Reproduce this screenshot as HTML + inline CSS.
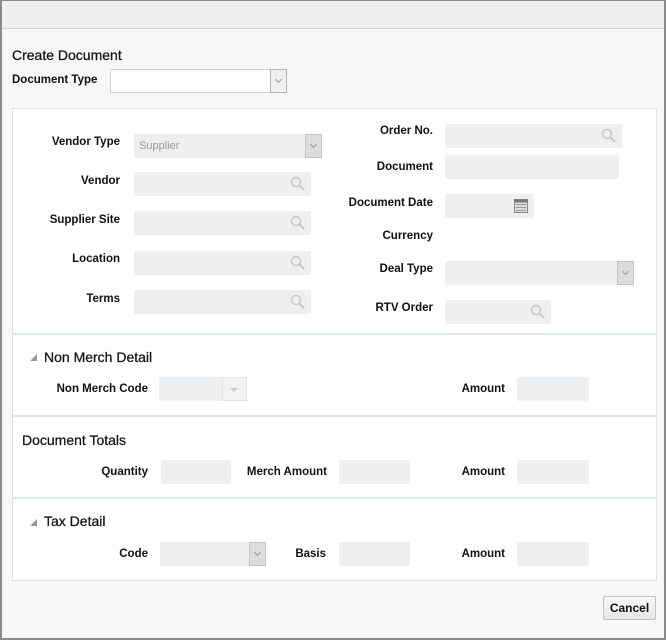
<!DOCTYPE html>
<html><head><style>
*{margin:0;padding:0;box-sizing:border-box}
body{width:666px;height:640px;position:relative;background:#f7f7f7;font-family:"Liberation Sans",Arial,sans-serif;overflow:hidden}
.frame{position:absolute;left:0;top:0;width:666px;height:640px;border:2px solid #8a8a8a;border-top:1px solid #8a8a8a}
.hdr{position:absolute;left:2px;top:1px;width:662px;height:28px;background:#efefef;border-bottom:1px solid #d0d5da}
.a{position:absolute}
.t{position:absolute;font-size:14px;color:#111;-webkit-text-stroke:0.25px #111}
.l{position:absolute;font-size:11.5px;font-weight:bold;color:#111;text-align:right;white-space:nowrap;margin-top:1px}
.f{position:absolute;background:#eeeff0;border-radius:2px;height:24px}
.panel{position:absolute;left:12px;top:108px;width:645px;height:473px;background:#fff;border:1px solid #d9e0e6}
.sep{position:absolute;left:12px;width:645px;height:2px;background:#dde4ea}
.dd{position:absolute;top:0;right:0;width:17px;height:24px;background:#dcdcdc;border:1px solid #c4c4c4}
.dd:after{content:"";position:absolute;left:5px;top:7px;width:4px;height:4px;border-right:1px solid #999;border-bottom:1px solid #999;transform:rotate(45deg)}
.mg{position:absolute;right:5px;top:4px}
.tri{position:absolute;width:0;height:0;border-left:7px solid transparent;border-bottom:7px solid #999}
</style></head><body>
<div class="hdr"></div>
<div class="t" style="left:12px;top:47px">Create Document</div>
<div class="l" style="left:12px;top:73px">Document Type</div>
<div class="a" style="left:110px;top:69px;width:177px;height:24px;background:#fff;border:1px solid #d0d4d8"><div class="dd" style="top:-1px;right:-1px;background:#f0f0f0;border-color:#b5b5b5"></div></div>
<div class="panel"></div>

<div class="l" style="right:546px;top:135px">Vendor Type</div>
<div class="f" style="left:134px;top:134px;width:188px"><span style="position:absolute;left:5px;top:6px;font-size:11px;color:#999">Supplier</span><div class="dd"></div></div>
<div class="l" style="right:546px;top:174px">Vendor</div>
<div class="f" style="left:134px;top:172px;width:177px"><svg class="mg" width="16" height="16"><circle cx="6" cy="6" r="4.5" fill="none" stroke="#c8c8c8" stroke-width="1.5"/><line x1="9.5" y1="9.5" x2="14" y2="14" stroke="#c8c8c8" stroke-width="2"/></svg></div>
<div class="l" style="right:546px;top:213px">Supplier Site</div>
<div class="f" style="left:134px;top:211px;width:177px"><svg class="mg" width="16" height="16"><circle cx="6" cy="6" r="4.5" fill="none" stroke="#c8c8c8" stroke-width="1.5"/><line x1="9.5" y1="9.5" x2="14" y2="14" stroke="#c8c8c8" stroke-width="2"/></svg></div>
<div class="l" style="right:546px;top:252px">Location</div>
<div class="f" style="left:134px;top:251px;width:177px"><svg class="mg" width="16" height="16"><circle cx="6" cy="6" r="4.5" fill="none" stroke="#c8c8c8" stroke-width="1.5"/><line x1="9.5" y1="9.5" x2="14" y2="14" stroke="#c8c8c8" stroke-width="2"/></svg></div>
<div class="l" style="right:546px;top:292px">Terms</div>
<div class="f" style="left:134px;top:290px;width:177px"><svg class="mg" width="16" height="16"><circle cx="6" cy="6" r="4.5" fill="none" stroke="#c8c8c8" stroke-width="1.5"/><line x1="9.5" y1="9.5" x2="14" y2="14" stroke="#c8c8c8" stroke-width="2"/></svg></div>

<div class="l" style="right:233px;top:124px">Order No.</div>
<div class="f" style="left:445px;top:124px;width:177px"><svg class="mg" width="16" height="16"><circle cx="6" cy="6" r="4.5" fill="none" stroke="#c8c8c8" stroke-width="1.5"/><line x1="9.5" y1="9.5" x2="14" y2="14" stroke="#c8c8c8" stroke-width="2"/></svg></div>
<div class="l" style="right:233px;top:160px">Document</div>
<div class="f" style="left:445px;top:155px;width:174px"></div>
<div class="l" style="right:233px;top:196px">Document Date</div>
<div class="f" style="left:445px;top:194px;width:89px"><svg style="position:absolute;left:69px;top:5px" width="14" height="14"><rect x="0.5" y="0.5" width="13" height="13" fill="#ddd" stroke="#888"/><rect x="0.5" y="0.5" width="13" height="3" fill="#777"/><g fill="#999"><rect x="2" y="5" width="10" height="1"/><rect x="2" y="8" width="10" height="1"/><rect x="2" y="11" width="10" height="1"/></g></svg></div>
<div class="l" style="right:233px;top:229px">Currency</div>
<div class="l" style="right:233px;top:262px">Deal Type</div>
<div class="f" style="left:445px;top:261px;width:189px"><div class="dd"></div></div>
<div class="l" style="right:233px;top:301px">RTV Order</div>
<div class="f" style="left:445px;top:300px;width:106px"><svg class="mg" width="16" height="16"><circle cx="6" cy="6" r="4.5" fill="none" stroke="#c8c8c8" stroke-width="1.5"/><line x1="9.5" y1="9.5" x2="14" y2="14" stroke="#c8c8c8" stroke-width="2"/></svg></div>

<div class="sep" style="top:333px"></div>
<div class="tri" style="left:30px;top:354px"></div>
<div class="t" style="left:44px;top:349px">Non Merch Detail</div>
<div class="l" style="right:518px;top:382px">Non Merch Code</div>
<div class="f" style="left:159px;top:377px;width:88px"><div style="position:absolute;right:0;top:0;width:25px;height:24px;border:1px solid #e2e2e2;background:#f2f2f2"></div><div style="position:absolute;right:9px;top:11px;border-left:4px solid transparent;border-right:4px solid transparent;border-top:4px solid #ccc"></div></div>
<div class="l" style="right:161px;top:382px">Amount</div>
<div class="f" style="left:517px;top:377px;width:72px"></div>

<div class="sep" style="top:415px"></div>
<div class="t" style="left:22px;top:432px">Document Totals</div>
<div class="l" style="right:518px;top:465px">Quantity</div>
<div class="f" style="left:161px;top:460px;width:70px"></div>
<div class="l" style="right:339px;top:465px">Merch Amount</div>
<div class="f" style="left:339px;top:460px;width:71px"></div>
<div class="l" style="right:161px;top:465px">Amount</div>
<div class="f" style="left:517px;top:460px;width:72px"></div>

<div class="sep" style="top:497px"></div>
<div class="tri" style="left:30px;top:519px"></div>
<div class="t" style="left:44px;top:513px">Tax Detail</div>
<div class="l" style="right:518px;top:547px">Code</div>
<div class="f" style="left:160px;top:542px;width:106px"><div class="dd"></div></div>
<div class="l" style="right:340px;top:547px">Basis</div>
<div class="f" style="left:339px;top:542px;width:71px"></div>
<div class="l" style="right:161px;top:547px">Amount</div>
<div class="f" style="left:517px;top:542px;width:72px"></div>

<div class="a" style="left:603px;top:596px;width:53px;height:24px;background:linear-gradient(#f7f7f7,#e6e6e6);border:1px solid #c2c2c2;border-radius:2px;font-size:12px;font-weight:bold;color:#111;text-align:center;line-height:22px">Cancel</div>
<div class="frame"></div>
</body></html>
